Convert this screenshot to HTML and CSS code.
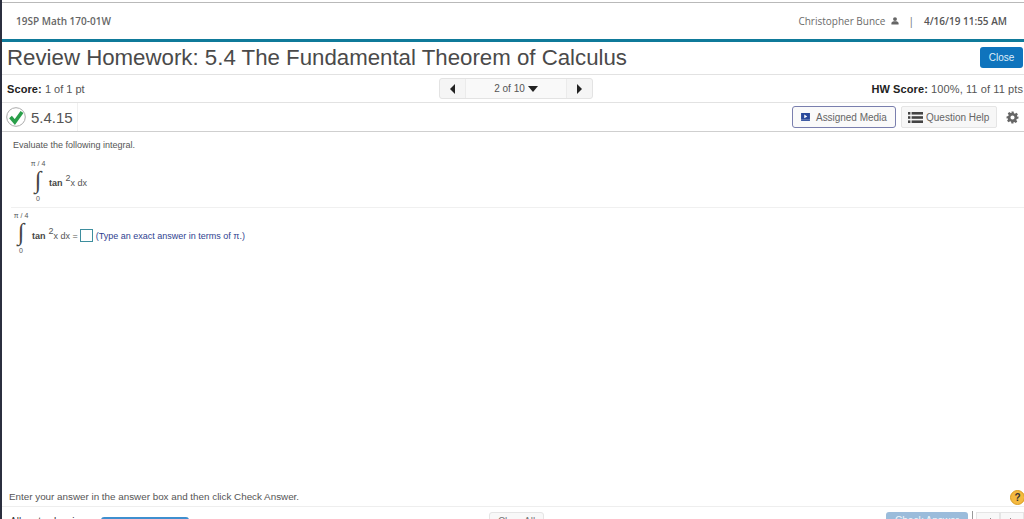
FILE: index.html
```html
<!DOCTYPE html>
<html lang="en">
<head>
<meta charset="utf-8">
<title>Review Homework</title>
<link rel="stylesheet" href="styles.css">
</head>
<body>
<div class="page">
  <header class="topbar">
    <span class="course">19SP Math 170-01W</span>
    <div class="userinfo">
      <span class="username">Christopher Bunce</span>
      <svg class="usericon" viewBox="0 0 10 10"><circle cx="5" cy="2.6" r="2.4"/><path d="M0.5 9.5V7.6C0.5 6.2 2 5.6 3.4 5.2H6.6C8 5.6 9.5 6.2 9.5 7.6V9.5Z"/></svg>
      <span class="sep">|</span>
      <span class="date">4/16/19 11:55 AM</span>
    </div>
  </header>
  <div class="titlerow">
    <h1 class="title">Review Homework: 5.4 The Fundamental Theorem of Calculus</h1>
    <button class="close">Close</button>
  </div>
  <div class="scorerow">
    <div class="score"><b>Score:</b> 1 of 1 pt</div>
    <div class="pager">
      <span class="pg-btn"><i class="tri-left"></i></span>
      <span class="pg-mid">2 of 10 <i class="tri-down"></i></span>
      <span class="pg-btn"><i class="tri-right"></i></span>
    </div>
    <div class="hwscore"><b>HW Score:</b> 100%, 11 of 11 pts</div>
  </div>
  <div class="qrow">
    <div class="qid">
      <svg class="check" viewBox="0 0 20 20"><circle cx="10" cy="10" r="9.3" fill="#fff" stroke="#aaa"/><path d="M4.5 10L8.8 15L16 5" fill="none" stroke="#2a9f4a" stroke-width="3.6"/></svg>
      <span class="qnum">5.4.15</span>
    </div>
    <div class="tools">
      <button class="media">
        <svg class="mediaicon" viewBox="0 0 10 9"><rect width="10" height="7.6" fill="#2a4a9a"/><rect y="8" width="10" height="1" fill="#2a4a9a"/><path d="M3.6 1.6L7 3.8L3.6 6Z" fill="#fff"/></svg>
        Assigned Media
      </button>
      <button class="help">
        <svg class="listicon" viewBox="0 0 15 11"><rect width="2.4" height="2.6" y="0"/><rect x="3.6" width="11.4" height="2.6"/><rect width="2.4" height="2.6" y="4.2"/><rect x="3.6" y="4.2" width="11.4" height="2.6"/><rect width="2.4" height="2.6" y="8.4"/><rect x="3.6" y="8.4" width="11.4" height="2.6"/></svg>
        Question Help
      </button>
      <svg class="gear" viewBox="0 0 24 24"><path fill-rule="evenodd" d="M10 1h4l.6 3.2 1.9.8 2.7-1.8 2.8 2.8-1.8 2.7.8 1.9L23 10v4l-3.2.6-.8 1.9 1.8 2.7-2.8 2.8-2.7-1.8-1.9.8L14 23h-4l-.6-3.2-1.9-.8-2.7 1.8-2.8-2.8 1.8-2.7-.8-1.9L1 14v-4l3.2-.6.8-1.9-1.8-2.7 2.8-2.8 2.7 1.8 1.9-.8ZM12 8.2a3.8 3.8 0 1 0 0 7.6a3.8 3.8 0 0 0 0-7.6Z"/></svg>
    </div>
  </div>
  <main class="content">
    <div class="prompt">
      <p class="intro">Evaluate the following integral.</p>
      <div class="integral first">
        <div class="limits"><span class="upper">π / 4</span><span class="sign">∫</span><span class="lower">0</span></div>
        <div class="expr"><b>tan</b><sup>2</sup>x dx</div>
      </div>
    </div>
    <div class="answer">
      <div class="integral">
        <div class="limits"><span class="upper">π / 4</span><span class="sign">∫</span><span class="lower">0</span></div>
        <div class="expr"><b>tan</b><sup>2</sup>x dx =</div>
        <span class="box"></span>
        <span class="hint">(Type an exact answer in terms of π.)</span>
      </div>
    </div>
  </main>
  <div class="instruct">
    <span>Enter your answer in the answer box and then click Check Answer.</span>
    <span class="qmark">?</span>
  </div>
  <footer class="bottom">
    <span class="parts">All parts showing</span>
    <span class="progress"></span>
    <span class="clear">Clear All</span>
    <span class="checkbtn">Check Answer</span>
    <span class="divider"></span>
    <span class="navbtns"><span class="navcell"><i class="tri-left"></i></span><span class="navcell"><i class="tri-right"></i></span></span>
  </footer>
</div>
</body>
</html>
```

FILE: styles.css
```css
* { box-sizing: border-box; }
html, body { margin: 0; padding: 0; height: 519px; overflow: hidden; background: #fff; }
body { font-family: "Liberation Sans", Arial, sans-serif; color: #444; }
.page { width: 1024px; height: 519px; border-left: 2px solid #2b2f3f; display: flex; flex-direction: column; overflow: hidden; }
.topbar { height: 40px; margin-top: 2px; flex: none; border-top: 1px solid #b9b9b9; border-bottom: 3px solid #0f7a9a; display: flex; align-items: center; justify-content: space-between; padding: 0 17px 0 14px; font-family: "Open Sans", sans-serif; font-size: 10px; color: #666; }
.course { font-weight: 600; color: #666; }
.userinfo { display: flex; align-items: center; }
.username { color: #6b6b6b; }
.usericon { width: 8px; height: 8px; fill: #666; margin-left: 6px; }
.sep { margin: 0 10px 0 9px; color: #666; }
.date { font-weight: 600; color: #555; }
.titlerow { height: 33px; flex: none; display: flex; align-items: center; justify-content: space-between; border-bottom: 1px solid #e2e2e2; padding: 0 1px 0 5px; }
.title { margin: 0; font-size: 22.25px; font-weight: 400; color: #4a4a4a; line-height: 26px; }
.close { width: 43px; height: 21px; background: #0f74bd; color: #dfeefa; border: 0; border-radius: 3px; font: 10px "Liberation Sans", sans-serif; padding: 0; margin-bottom: 2px; }
.scorerow { height: 28px; flex: none; display: grid; grid-template-columns: 1fr auto 1fr; align-items: center; border-bottom: 1px solid #e2e2e2; padding: 0 1px 0 5px; font-size: 11px; color: #555; }
.score b, .hwscore b { color: #222; letter-spacing: .1px; }
.hwscore { text-align: right; letter-spacing: .1px; }
.pager { display: flex; width: 154px; height: 21px; border: 1px solid #e3e3e3; border-radius: 3px; background: #f5f5f5; margin-left: 2px; }
.pg-btn { width: 25px; display: flex; align-items: center; justify-content: center; }
.pg-mid { flex: 1; display: flex; align-items: center; justify-content: center; gap: 3px; background: #f9f9f9; border: solid #ebebeb; border-width: 0 1px; font-size: 10px; color: #555; letter-spacing: 0; }
.tri-left { border: 5px solid transparent; border-left: 0; border-right: 5px solid #222; }
.tri-right { border: 5px solid transparent; border-right: 0; border-left: 5px solid #222; }
.tri-down { border: 4px solid transparent; border-bottom: 0; border-top: 6px solid #222; width: 0; border-left-width: 5px; border-right-width: 5px; }
.qrow { height: 29px; flex: none; display: flex; align-items: center; justify-content: space-between; border-bottom: 1px solid #cfcfcf; padding: 0 0 0 4px; }
.qid { display: flex; align-items: center; gap: 5px; height: 100%; padding-right: 4px; border-right: 1px solid #f0f0f0; }
.check { width: 20px; height: 20px; }
.qnum { font-size: 15px; color: #555; }
.tools { display: flex; align-items: center; }
.media, .help { height: 22px; font: 10px "Liberation Sans", sans-serif; color: #666; display: flex; align-items: center; padding: 0; }
.media { width: 104px; border: 1px solid #7a7fae; border-radius: 3px; background: #fafafa; padding-left: 8px; gap: 6px; margin-right: 5px; letter-spacing: -.03px; }
.mediaicon { width: 9px; height: 8px; }
.help { width: 96px; border: 1px solid #e5e5e5; border-radius: 2px; background: #f7f7f7; padding-left: 6px; gap: 3px; margin-right: 9px; }
.listicon { width: 15px; height: 11px; fill: #444; }
.gear { width: 13px; height: 13px; fill: #666; margin-right: 5px; }
.content { flex: 1; display: flex; flex-direction: column; padding: 0 0 0 9px; font-size: 9px; color: #555; min-height: 0; }
.prompt { height: 76px; flex: none; padding: 8px 0 0 2px; border-bottom: 1px solid #f0f0f0; }
.intro { margin: 0; line-height: 10px; }
.integral { display: flex; align-items: flex-start; }
.first { margin: 10px 0 0 17px; }
.limits { display: flex; flex-direction: column; align-items: center; width: 16px; color: #555; font-size: 7px; line-height: 8px; white-space: nowrap; }
.upper, .lower { height: 8px; }
.sign { height: 27px; font-size: 24px; line-height: 25px; color: #444; font-family: "Liberation Serif", serif; }
.expr { margin: 17px 0 0 3px; white-space: nowrap; color: #555; line-height: 12px; }
.expr b { color: #444; }
.expr sup { font-size: 9px; line-height: 0; margin-left: 3px; vertical-align: 5px; }
.answer { padding: 4px 0 0 2px; }
.answer .expr { margin-top: 18px; }
.box { width: 13px; height: 13px; border: 1px solid #3e8e9e; margin: 17px 3px 0 2px; flex: none; }
.hint { color: #2f3f90; white-space: nowrap; margin-top: 18px; line-height: 12px; }
.instruct { height: 23px; flex: none; display: flex; align-items: center; justify-content: space-between; border-bottom: 1px solid #eee; padding: 3px 0 0 7px; font-size: 9.83px; color: #555; }
.qmark { width: 15px; height: 15px; border-radius: 50%; background: #f4b93f; color: #333; font-size: 10px; font-weight: 700; display: flex; align-items: center; justify-content: center; border: 1px solid #d99c20; margin-top: 1px; margin-right: -1px; flex: none; }
.bottom { height: 12px; flex: none; font-size: 10px; display: flex; align-items: flex-start; }
.parts { width: 99px; padding-left: 8px; margin-top: 9px; color: #333; white-space: nowrap; }
.progress { width: 88px; height: 20px; background: #3f8fcf; border-radius: 3px 3px 0 0; margin-top: 10px; }
.clear { width: 55px; height: 20px; margin-left: 300px; margin-top: 5px; border: 1px solid #e5e5e5; border-radius: 3px; background: #f8f8f8; text-align: center; color: #777; padding-top: 3px; }
.checkbtn { width: 82px; height: 20px; margin-left: 342px; margin-top: 5px; background: #9bbcdb; border-radius: 3px 3px 0 0; color: #eef4fa; text-align: center; padding-top: 3px; }
.divider { width: 1px; height: 20px; margin-left: 4px; margin-top: 4px; background: #999; }
.navbtns { display: flex; margin-left: 3px; margin-top: 5px; }
.navcell { width: 24px; height: 20px; border: 1px solid #e5e5e5; background: #f8f8f8; display: flex; justify-content: center; padding-top: 5px; }
```
